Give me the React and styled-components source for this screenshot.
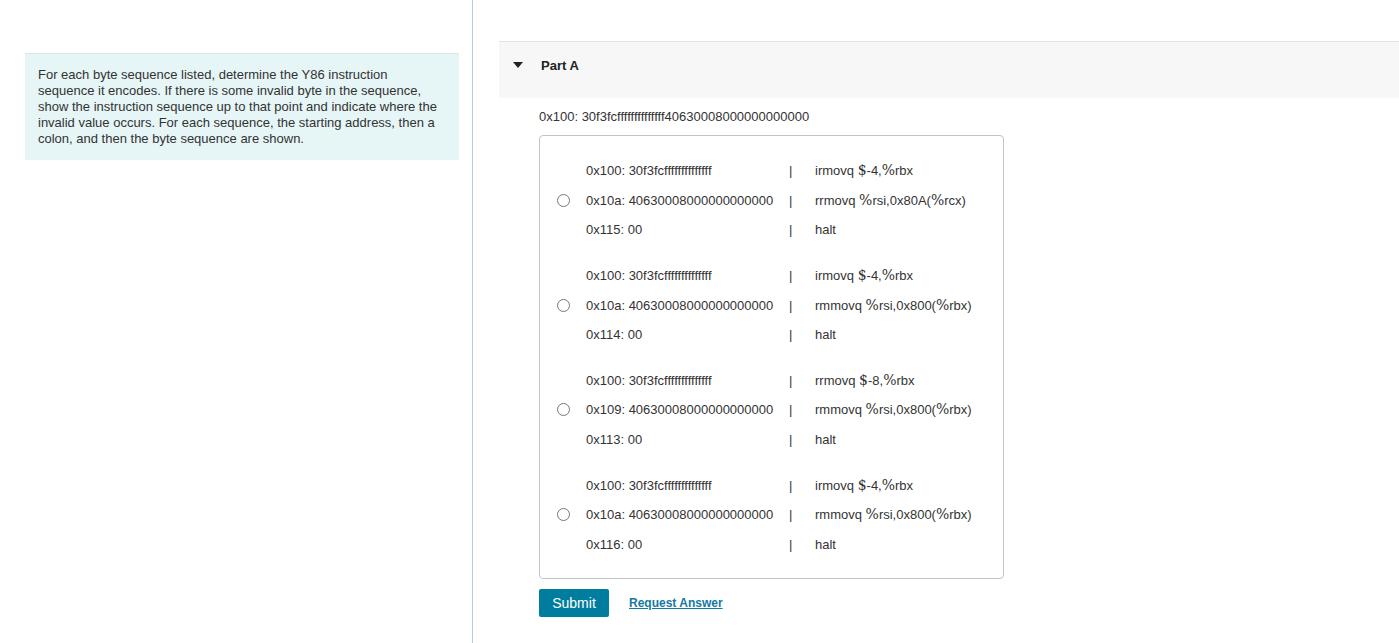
import React from "react";
import styled, { createGlobalStyle } from "styled-components";

const Global = createGlobalStyle`
  html, body { margin: 0; padding: 0; background: #fff; }
  body { font-family: "Liberation Sans", Arial, sans-serif; color: #333; }
  * { box-sizing: border-box; }
`;

const Page = styled.div`
  display: flex;
  min-height: 643px;
`;

const LeftPane = styled.aside`
  width: 473px;
  flex-shrink: 0;
  border-right: 1px solid #b7cad9;
  padding: 53px 13px 0 25px;
`;

const Instructions = styled.div`
  background: #e6f5f6;
  border-top: 1px solid #d9e6e7;
  padding: 13px 12px 13px 13px;
  font-size: 13px;
  line-height: 16px;
  color: #333;
`;

const RightPane = styled.main`
  flex: 1;
  padding-top: 41px;
  padding-left: 26px;
`;

const PartHeader = styled.div`
  height: 57px;
  background: #f7f7f7;
  border-top: 1px solid #e2e2e2;
  display: flex;
  align-items: center;
  padding-left: 14px;
  padding-bottom: 10px;
  gap: 18px;
`;

const Caret = styled.span`
  width: 0;
  height: 0;
  border-left: 5.5px solid transparent;
  border-right: 5.5px solid transparent;
  border-top: 6px solid #222;
`;

const PartTitle = styled.h2`
  margin: 0;
  font-size: 13px;
  font-weight: bold;
  color: #222;
`;

const Body = styled.div`
  padding-left: 40px;
`;

const Prompt = styled.p`
  margin: 11px 0 0;
  font-size: 13px;
  line-height: 15px;
`;

const Card = styled.div`
  margin-top: 11px;
  width: 465px;
  border: 1px solid #c4c4c4;
  border-radius: 4px;
  padding: 20px 0 19px 17px;
  display: flex;
  flex-direction: column;
  gap: 16px;
`;

const Option = styled.label`
  display: flex;
  align-items: center;
`;

const Radio = styled.span`
  width: 13px;
  height: 13px;
  border: 1px solid #767676;
  border-radius: 50%;
  flex-shrink: 0;
  margin-right: 16px;
`;

const Lines = styled.div`
  display: flex;
  flex-direction: column;
`;

const Line = styled.div`
  display: grid;
  grid-template-columns: 203px 26px auto;
  height: 29.6px;
  align-items: center;
  font-size: 13px;
  color: #333;
  white-space: nowrap;
`;

const Sym = styled.span`
  font-family: "DejaVu Serif", "Liberation Serif", serif;
  font-size: 14px;
  line-height: 1;
`;

const Actions = styled.div`
  margin-top: 10px;
  display: flex;
  align-items: center;
  gap: 20px;
`;

const SubmitButton = styled.button`
  width: 70px;
  height: 28px;
  background: #007c9e;
  color: #fff;
  border: none;
  border-radius: 2px;
  font-family: "Liberation Sans", Arial, sans-serif;
  font-size: 14px;
  padding: 0;
`;

const LinkButton = styled.a`
  font-size: 12px;
  font-weight: bold;
  color: #1279a3;
  text-decoration: underline;
`;

const fmt = (s) =>
  s.split(/([$%])/).map((p, i) =>
    p === "$" || p === "%" ? <Sym key={i}>{p}</Sym> : <React.Fragment key={i}>{p}</React.Fragment>
  );

const options = [
  [
    ["0x100: 30f3fcffffffffffffff", "irmovq $-4,%rbx"],
    ["0x10a: 40630008000000000000", "rrmovq %rsi,0x80A(%rcx)"],
    ["0x115: 00", "halt"],
  ],
  [
    ["0x100: 30f3fcffffffffffffff", "irmovq $-4,%rbx"],
    ["0x10a: 40630008000000000000", "rmmovq %rsi,0x800(%rbx)"],
    ["0x114: 00", "halt"],
  ],
  [
    ["0x100: 30f3fcffffffffffffff", "rrmovq $-8,%rbx"],
    ["0x109: 40630008000000000000", "rmmovq %rsi,0x800(%rbx)"],
    ["0x113: 00", "halt"],
  ],
  [
    ["0x100: 30f3fcffffffffffffff", "irmovq $-4,%rbx"],
    ["0x10a: 40630008000000000000", "rmmovq %rsi,0x800(%rbx)"],
    ["0x116: 00", "halt"],
  ],
];

export default function App() {
  return (
    <>
      <Global />
      <Page>
        <LeftPane>
          <Instructions>
            For each byte sequence listed, determine the Y86 instruction sequence it encodes. If there is
            some invalid byte in the sequence, show the instruction sequence up to that point and indicate
            where the invalid value occurs. For each sequence, the starting address, then a colon, and then
            the byte sequence are shown.
          </Instructions>
        </LeftPane>
        <RightPane>
          <PartHeader>
            <Caret />
            <PartTitle>Part A</PartTitle>
          </PartHeader>
          <Body>
            <Prompt>0x100: 30f3fcffffffffffffff40630008000000000000</Prompt>
            <Card>
              {options.map((opt, i) => (
                <Option key={i}>
                  <Radio />
                  <Lines>
                    {opt.map(([a, b], j) => (
                      <Line key={j}>
                        <span>{a}</span>
                        <span>|</span>
                        <span>{fmt(b)}</span>
                      </Line>
                    ))}
                  </Lines>
                </Option>
              ))}
            </Card>
            <Actions>
              <SubmitButton>Submit</SubmitButton>
              <LinkButton href="#">Request Answer</LinkButton>
            </Actions>
          </Body>
        </RightPane>
      </Page>
    </>
  );
}
